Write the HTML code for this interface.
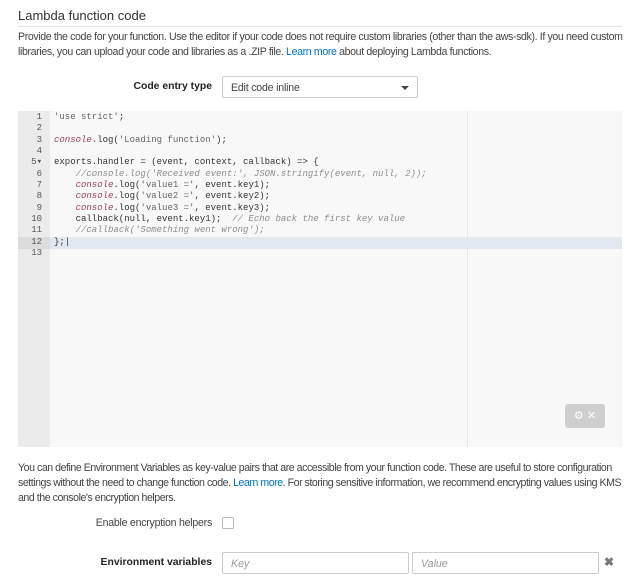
<!DOCTYPE html>
<html><head><meta charset="utf-8"><style>
body{margin:0;background:#fff;font-family:"Liberation Sans",sans-serif;color:#444;width:640px;height:587px;position:relative;overflow:hidden}
.a{position:absolute}
h1{position:absolute;left:18px;top:8px;margin:0;font-size:13px;font-weight:normal;color:#333}
.rule{left:18px;top:26px;width:604px;height:1px;background:#e4e4e4}
p{margin:0;font-size:10.6px;line-height:14.5px;color:#444;letter-spacing:-0.37px;white-space:nowrap}
a{color:#0073bb;text-decoration:none}
.lbl{font-size:10.4px;color:#222;font-weight:bold;text-align:right;width:200px}
.ed{left:18px;top:111px;width:604px;height:336px;background:#f8f8f8}
.gut{left:18px;top:111px;width:32px;height:336px;background:#ebebeb}
.code{left:18px;top:112px;font-family:"Liberation Mono",monospace;font-size:9px;line-height:11.35px;color:#333;white-space:pre}
.ln{display:inline-block;width:24px;text-align:right;color:#555;margin-right:12px}
.c{color:#8d8d8d;font-style:italic}.k{color:#a04066;font-style:italic}.s{color:#666}
.box{border:1px solid #ccc;border-radius:2px;background:#fff;font-size:10.6px;color:#999;font-style:italic;box-sizing:border-box;padding:5px 8px}
</style></head><body>
<h1>Lambda function code</h1>
<div class="a rule"></div>
<p class="a" style="left:18px;top:30px">Provide the code for your function. Use the editor if your code does not require custom libraries (other than the aws-sdk). If you need custom<br>libraries, you can upload your code and libraries as a .ZIP file. <a>Learn more</a> about deploying Lambda functions.</p>
<div class="a lbl" style="left:12px;top:81px">Code entry type</div>
<div class="a" style="left:222px;top:76px;width:196px;height:22px;border:1px solid #ccc;border-radius:2px;box-sizing:border-box;font-size:10.6px;color:#444;padding:5px 8px;letter-spacing:-0.2px">Edit code inline<span class="a" style="right:8px;top:9px;border-left:4px solid transparent;border-right:4px solid transparent;border-top:4px solid #444"></span></div>
<div class="a ed"></div>
<div class="a gut"></div>
<div class="a" style="left:467px;top:111px;width:1px;height:336px;background:#e6e6e6"></div>
<div class="a" style="left:50px;top:237px;width:572px;height:12px;background:#e2e8f0"></div>
<div class="a" style="left:18px;top:237px;width:32px;height:12px;background:#dcdcdc"></div>
<div class="a code"><span class="ln">1</span><span class="s">'use strict'</span>;
<span class="ln">2</span>
<span class="ln">3</span><span class="k">console</span>.log(<span class="s">'Loading function'</span>);
<span class="ln">4</span>
<span class="ln">5▾</span>exports.handler = (event, context, callback) => {
<span class="ln">6</span>    <span class="c">//console.log('Received event:', JSON.stringify(event, null, 2));</span>
<span class="ln">7</span>    <span class="k">console</span>.log(<span class="s">'value1 ='</span>, event.key1);
<span class="ln">8</span>    <span class="k">console</span>.log(<span class="s">'value2 ='</span>, event.key2);
<span class="ln">9</span>    <span class="k">console</span>.log(<span class="s">'value3 ='</span>, event.key3);
<span class="ln">10</span>    callback(null, event.key1);  <span class="c">// Echo back the first key value</span>
<span class="ln">11</span>    <span class="c">//callback('Something went wrong');</span>
<span class="ln">12</span>};|
<span class="ln">13</span></div>
<div class="a" style="left:565px;top:404px;width:40px;height:24px;background:#cfcfcf;border-radius:3px;color:#fff;font-size:11px;text-align:center;line-height:24px">⚙ ✕</div>
<p class="a" style="left:18px;top:461px;line-height:15px;letter-spacing:-0.46px">You can define Environment Variables as key-value pairs that are accessible from your function code. These are useful to store configuration<br>settings without the need to change function code. <a>Learn more</a>. For storing sensitive information, we recommend encrypting values using KMS<br>and the console's encryption helpers.</p>
<div class="a" style="left:12px;top:517px;width:200px;text-align:right;font-size:10.6px;color:#444;letter-spacing:-0.25px">Enable encryption helpers</div>
<div class="a" style="left:222px;top:517px;width:10px;height:10px;border:1px solid #bbb;border-radius:2px"></div>
<div class="a lbl" style="left:12px;top:557px">Environment variables</div>
<div class="a box" style="left:222px;top:552px;width:187px;height:22px">Key</div>
<div class="a box" style="left:412px;top:552px;width:187px;height:22px">Value</div>
<div class="a" style="left:604px;top:555px;font-size:12px;color:#777;font-weight:bold">✖</div>
</body></html>
